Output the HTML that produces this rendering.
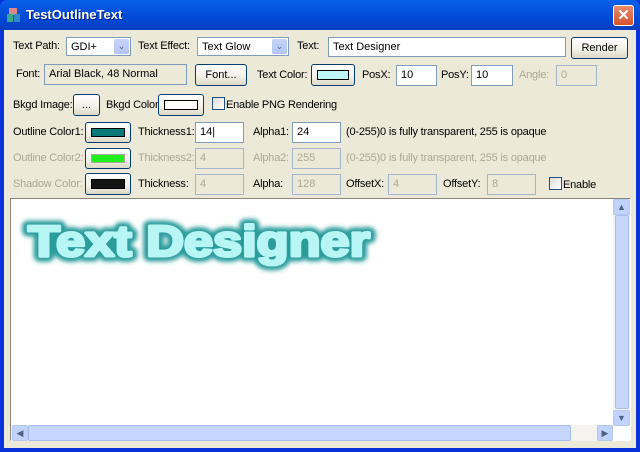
<!DOCTYPE html>
<html><head><style>
*{margin:0;padding:0;box-sizing:border-box}
body{width:640px;height:452px;overflow:hidden;background:#0831d9;font:11px "Liberation Sans",sans-serif;color:#000;position:relative}
.title{position:absolute;left:0;top:0;width:640px;height:30px;background:linear-gradient(#0a5fe8,#0554e0 30%,#0246d2 70%,#0a3fc0);border-radius:7px 7px 0 0}
.title span{position:absolute;left:26px;top:7px;color:#fff;font:bold 13px "Liberation Sans",sans-serif;text-shadow:1px 1px #0a1e70}
.close{position:absolute;left:613px;top:5px;width:21px;height:21px;background:linear-gradient(#e88a6a,#d5522d);border:1px solid #fff;border-radius:3px;color:#fff;font:bold 15px "Liberation Sans";text-align:center;line-height:19px}
.client{position:absolute;left:4px;top:30px;width:632px;height:418px;background:#ece9d8}
.l{position:absolute;white-space:nowrap;font-size:11px;line-height:13px;letter-spacing:-0.2px}
.g{color:#aca899}
.e{position:absolute;background:#fff;border:1px solid #7f9db9;padding:2px 4px;font-size:11px;line-height:14px;white-space:nowrap}
.d{background:#ece9d8;color:#aca899;border-color:#a5b5c9}
.b{position:absolute;background:linear-gradient(#fff,#f1efe6 60%,#dcd8c6);border:1px solid #003c74;border-radius:3px;text-align:center;font-size:11px}
.sw{position:absolute;left:5px;right:5px;top:5px;bottom:5px;border:1px solid #000}
.cb{position:absolute;width:13px;height:13px;border:1px solid #1c5180;background:linear-gradient(135deg,#dcdcd7,#fff)}
.combo .arr{position:absolute;right:1px;top:1px;width:15px;height:15px;background:linear-gradient(#c6d3f7,#b3c6f5);border-radius:2px;color:#4d6185;font-size:9px;text-align:center;line-height:15px}
</style></head><body>
<div class="title"><svg style="position:absolute;left:6px;top:7px" width="16" height="16"><rect x="3" y="1" width="8" height="7" fill="#d88"/><rect x="1" y="7" width="6" height="8" fill="#3a8"/><rect x="8" y="7" width="6" height="8" fill="#38c"/></svg><span>TestOutlineText</span><div class="close">✕</div></div>
<div class="client"></div>
<div style="position:absolute;left:0;top:0">
<div class="l" style="left:13px;top:40px">Text Path:</div>
<div class="e combo" style="left:66px;top:37px;width:65px;height:19px">GDI+<div class="arr">⌄</div></div>
<div class="l" style="left:138px;top:40px">Text Effect:</div>
<div class="e combo" style="left:197px;top:37px;width:92px;height:19px">Text Glow<div class="arr">⌄</div></div>
<div class="l" style="left:297px;top:40px">Text:</div>
<div class="e" style="left:328px;top:37px;width:238px;height:20px">Text Designer</div>
<div class="b" style="left:571px;top:37px;width:57px;height:22px;line-height:20px">Render</div>

<div class="l" style="left:16px;top:68px">Font:</div>
<div class="e" style="left:44px;top:64px;width:143px;height:21px;background:#ece9d8;border-color:#7f9db9">Arial Black, 48 Normal</div>
<div class="b" style="left:195px;top:64px;width:52px;height:22px;line-height:20px">Font...</div>
<div class="l" style="left:257px;top:69px">Text Color:</div>
<div class="b" style="left:311px;top:64px;width:44px;height:22px"><div class="sw" style="background:#bff7f7"></div></div>
<div class="l" style="left:362px;top:69px">PosX:</div>
<div class="e" style="left:396px;top:65px;width:41px;height:21px">10</div>
<div class="l" style="left:441px;top:69px">PosY:</div>
<div class="e" style="left:471px;top:65px;width:42px;height:21px">10</div>
<div class="l g" style="left:519px;top:69px">Angle:</div>
<div class="e d" style="left:556px;top:65px;width:41px;height:21px">0</div>

<div class="l" style="left:13px;top:99px">Bkgd Image:</div>
<div class="b" style="left:73px;top:94px;width:27px;height:22px;line-height:20px">...</div>
<div class="l" style="left:106px;top:99px">Bkgd Color:</div>
<div class="b" style="left:158px;top:94px;width:46px;height:22px"><div class="sw" style="background:#fff"></div></div>
<div class="cb" style="left:212px;top:97px"></div>
<div class="l" style="left:226px;top:99px">Enable PNG Rendering</div>

<div class="l" style="left:13px;top:126px">Outline Color1:</div>
<div class="b" style="left:85px;top:122px;width:46px;height:21px"><div class="sw" style="background:#087878"></div></div>
<div class="l" style="left:138px;top:126px">Thickness1:</div>
<div class="e" style="left:195px;top:122px;width:49px;height:21px">14|</div>
<div class="l" style="left:253px;top:126px">Alpha1:</div>
<div class="e" style="left:292px;top:122px;width:49px;height:21px">24</div>
<div class="l" style="left:346px;top:126px">(0-255)0 is fully transparent, 255 is opaque</div>

<div class="l g" style="left:13px;top:152px">Outline Color2:</div>
<div class="b" style="left:85px;top:148px;width:46px;height:21px"><div class="sw" style="background:#1ef01e;border-color:#aca899"></div></div>
<div class="l g" style="left:138px;top:152px">Thickness2:</div>
<div class="e d" style="left:195px;top:148px;width:49px;height:21px">4</div>
<div class="l g" style="left:253px;top:152px">Alpha2:</div>
<div class="e d" style="left:292px;top:148px;width:49px;height:21px">255</div>
<div class="l g" style="left:346px;top:152px">(0-255)0 is fully transparent, 255 is opaque</div>

<div class="l g" style="left:13px;top:178px">Shadow Color:</div>
<div class="b" style="left:85px;top:173px;width:46px;height:22px"><div class="sw" style="background:#141414"></div></div>
<div class="l" style="left:138px;top:178px">Thickness:</div>
<div class="e d" style="left:195px;top:174px;width:49px;height:21px">4</div>
<div class="l" style="left:253px;top:178px">Alpha:</div>
<div class="e d" style="left:292px;top:174px;width:49px;height:21px">128</div>
<div class="l" style="left:346px;top:178px">OffsetX:</div>
<div class="e d" style="left:388px;top:174px;width:49px;height:21px">4</div>
<div class="l" style="left:443px;top:178px">OffsetY:</div>
<div class="e d" style="left:487px;top:174px;width:49px;height:21px">8</div>
<div class="cb" style="left:549px;top:177px"></div>
<div class="l" style="left:563px;top:179px">Enable</div>
</div>

<div style="position:absolute;left:10px;top:198px;width:621px;height:243px;background:#fff;border:1px solid #8a877a;border-right-color:#fff;border-bottom-color:#fff"></div>
<svg style="position:absolute;left:11px;top:199px" width="602" height="226">
<defs><filter id="bl" x="-10%" y="-30%" width="120%" height="160%"><feGaussianBlur stdDeviation="2"/></filter></defs>
<g font-family="Liberation Sans,sans-serif" font-weight="bold" font-size="44">
<text x="17" y="57" textLength="342" lengthAdjust="spacingAndGlyphs" fill="#2a9c9c" stroke="#2a9c9c" stroke-width="11" stroke-linejoin="round" filter="url(#bl)">Text Designer</text>
<text x="17" y="57" textLength="342" lengthAdjust="spacingAndGlyphs" fill="#b8f6f6" stroke="#b8f6f6" stroke-width="3" stroke-linejoin="round">Text Designer</text>
</g></svg>
<div style="position:absolute;left:613px;top:199px;width:17px;height:226px;background:#f4f3ee"></div>
<div style="position:absolute;left:613px;top:199px;width:17px;height:16px;background:#c1d3fb;border:1px solid #b5c8f0;border-radius:2px;color:#4d6185;font-size:9px;text-align:center;line-height:14px">▲</div>
<div style="position:absolute;left:615px;top:215px;width:14px;height:194px;background:#c6d6fc;border:1px solid #a8bdf0;border-radius:2px"></div>
<div style="position:absolute;left:613px;top:410px;width:17px;height:16px;background:#c1d3fb;border:1px solid #b5c8f0;border-radius:2px;color:#4d6185;font-size:9px;text-align:center;line-height:14px">▼</div>
<div style="position:absolute;left:11px;top:425px;width:602px;height:16px;background:#f4f3ee"></div>
<div style="position:absolute;left:12px;top:425px;width:16px;height:16px;background:#c1d3fb;border:1px solid #b5c8f0;border-radius:2px;color:#4d6185;font-size:9px;text-align:center;line-height:14px">◀</div>
<div style="position:absolute;left:28px;top:425px;width:543px;height:16px;background:#c6d6fc;border:1px solid #a8bdf0;border-radius:2px"></div>
<div style="position:absolute;left:597px;top:425px;width:16px;height:16px;background:#c1d3fb;border:1px solid #b5c8f0;border-radius:2px;color:#4d6185;font-size:9px;text-align:center;line-height:14px">▶</div>
</body></html>
